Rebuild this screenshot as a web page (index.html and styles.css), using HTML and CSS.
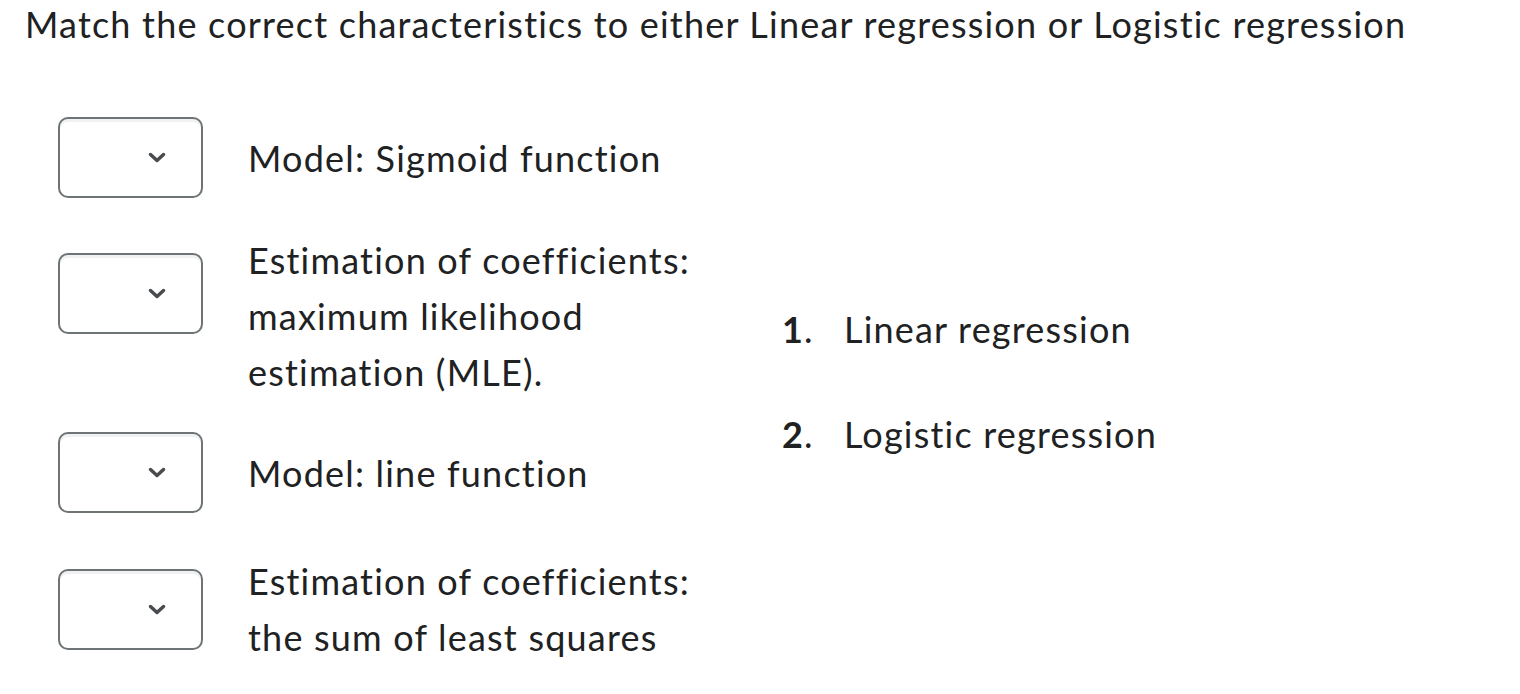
FILE: index.html
```html
<!DOCTYPE html>
<html lang="en">
<head>
<meta charset="utf-8">
<title>Matching question</title>
<link rel="stylesheet" href="styles.css">
</head>
<body>
<main class="question">
  <h1 class="prompt">Match the correct characteristics to either Linear regression or Logistic regression</h1>
  <div class="matching">
    <div class="pairs">
      <div class="pair pair-1">
        <div class="picker" role="combobox" aria-label="Choice for item 1">
          <svg class="chevron" width="18" height="11" viewBox="0 0 18 11"><polyline points="2.5,2.5 9,8.5 15.5,2.5"/></svg>
        </div>
        <p class="item">Model: Sigmoid function</p>
      </div>
      <div class="pair pair-2">
        <div class="picker picker-top" role="combobox" aria-label="Choice for item 2">
          <svg class="chevron" width="18" height="11" viewBox="0 0 18 11"><polyline points="2.5,2.5 9,8.5 15.5,2.5"/></svg>
        </div>
        <p class="item">Estimation of coefficients: maximum likelihood estimation (MLE).</p>
      </div>
      <div class="pair pair-3">
        <div class="picker" role="combobox" aria-label="Choice for item 3">
          <svg class="chevron" width="18" height="11" viewBox="0 0 18 11"><polyline points="2.5,2.5 9,8.5 15.5,2.5"/></svg>
        </div>
        <p class="item">Model: line function</p>
      </div>
      <div class="pair pair-4">
        <div class="picker" role="combobox" aria-label="Choice for item 4">
          <svg class="chevron" width="18" height="11" viewBox="0 0 18 11"><polyline points="2.5,2.5 9,8.5 15.5,2.5"/></svg>
        </div>
        <p class="item">Estimation of coefficients: the sum of least squares</p>
      </div>
    </div>
    <ol class="choices">
      <li class="choice"><span class="num"><b>1</b>.</span><span>Linear regression</span></li>
      <li class="choice"><span class="num"><b>2</b>.</span><span>Logistic regression</span></li>
    </ol>
  </div>
</main>
</body>
</html>
```

FILE: styles.css
```css
html, body {
  margin: 0;
  padding: 0;
  background: #ffffff;
}

body {
  font-family: Lato, "Noto Sans", sans-serif;
  color: #202122;
  font-size: 36px;
  line-height: 56px;
  letter-spacing: 1.2px;
  font-variant-ligatures: none;
}

.question {
  padding: 2px 0 0 25px;
}

.prompt {
  margin: 0;
  font-size: 36px;
  font-weight: 400;
  line-height: 44px;
}

.matching {
  display: flex;
  align-items: flex-start;
  margin-top: 71px;
  padding-left: 33px;
}

.pairs {
  display: flex;
  flex-direction: column;
}

.pair {
  display: flex;
  align-items: center;
  gap: 45px;
}

.pair-2 { margin-top: 34px; }
.pair-3 { margin-top: 32px; }
.pair-4 { margin-top: 40px; }

.picker {
  box-sizing: border-box;
  flex: none;
  width: 145px;
  height: 81px;
  border: 2px solid #6e7376;
  border-radius: 10px;
  background: #ffffff;
  box-shadow: inset 0 3px 0 0 rgba(177, 185, 190, 0.2);
  display: flex;
  align-items: center;
  justify-content: flex-end;
  padding-right: 35px;
}

.picker-top {
  align-self: flex-start;
  margin-top: 21px;
}

.chevron polyline {
  fill: none;
  stroke: #494c4e;
  stroke-width: 3.5;
  stroke-linecap: round;
  stroke-linejoin: round;
}

.item {
  margin: 0;
  width: 470px;
}

.choices {
  list-style: none;
  margin: 0 0 0 64px;
  padding: 184px 0 0 0;
  display: flex;
  flex-direction: column;
  gap: 49px;
}

.choice {
  display: flex;
}

.num {
  width: 62px;
  flex: none;
}

.num b {
  font-weight: 700;
}
```
